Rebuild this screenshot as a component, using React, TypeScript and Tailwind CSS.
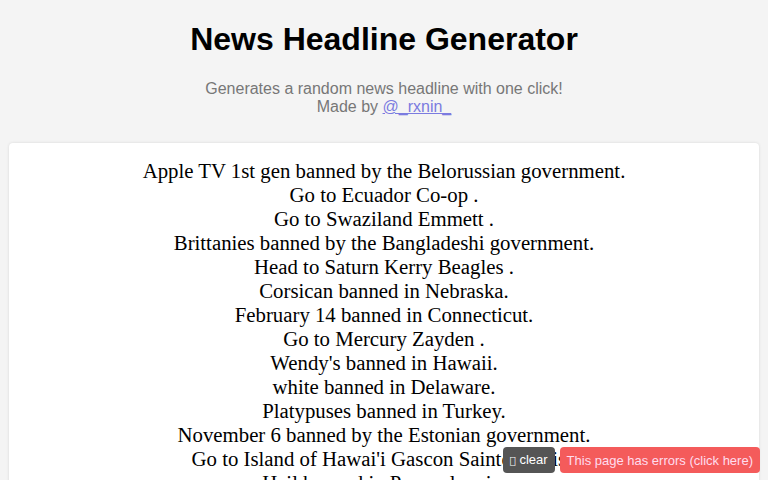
const headlines = [
  "Apple TV 1st gen banned by the Belorussian government.",
  "Go to Ecuador Co-op .",
  "Go to Swaziland Emmett .",
  "Brittanies banned by the Bangladeshi government.",
  "Head to Saturn Kerry Beagles .",
  "Corsican banned in Nebraska.",
  "February 14 banned in Connecticut.",
  "Go to Mercury Zayden .",
  "Wendy's banned in Hawaii.",
  "white banned in Delaware.",
  "Platypuses banned in Turkey.",
  "November 6 banned by the Estonian government.",
  "Go to Island of Hawai'i Gascon Saintongeois .",
  "Hail banned in Pennsylvania.",
];

function App() {
  return (
    <div className="min-h-screen w-full bg-[#f4f4f4] px-[9px] pt-[21px] font-['Liberation_Sans',Arial,sans-serif] overflow-hidden">
      <h1 className="text-center text-[32px] font-bold leading-[37px] text-black">
        News Headline Generator
      </h1>

      <p className="mt-[22px] text-center text-base leading-[18px] text-[#777]">
        Generates a random news headline with one click!
        <br />
        Made by{" "}
        <a href="#" className="text-[#7b7be0] underline">
          @_rxnin_
        </a>
      </p>

      {/* headline list */}
      <div className="mt-[27px] rounded bg-white py-4 shadow-[0_0_3px_rgba(0,0,0,0.12)]">
        {headlines.map((h, i) => (
          <div
            key={i}
            className="text-center font-['Liberation_Serif','Times_New_Roman',serif] text-[20.8px] leading-6 text-black"
          >
            {h}
          </div>
        ))}
      </div>

      {/* dev overlay buttons */}
      <div className="fixed right-2 top-[447px] flex gap-[5px] text-[13px] leading-[25px]">
        <button className="rounded bg-[#555] px-[7px] text-white">
          <span className="font-['DejaVu_Sans',sans-serif] text-[10px]">&#xf00d;</span> clear
        </button>
        <button className="rounded bg-[#f45b5b] px-[7px] text-[#fde]">
          This page has errors (click here)
        </button>
      </div>
    </div>
  );
}

export default App;
